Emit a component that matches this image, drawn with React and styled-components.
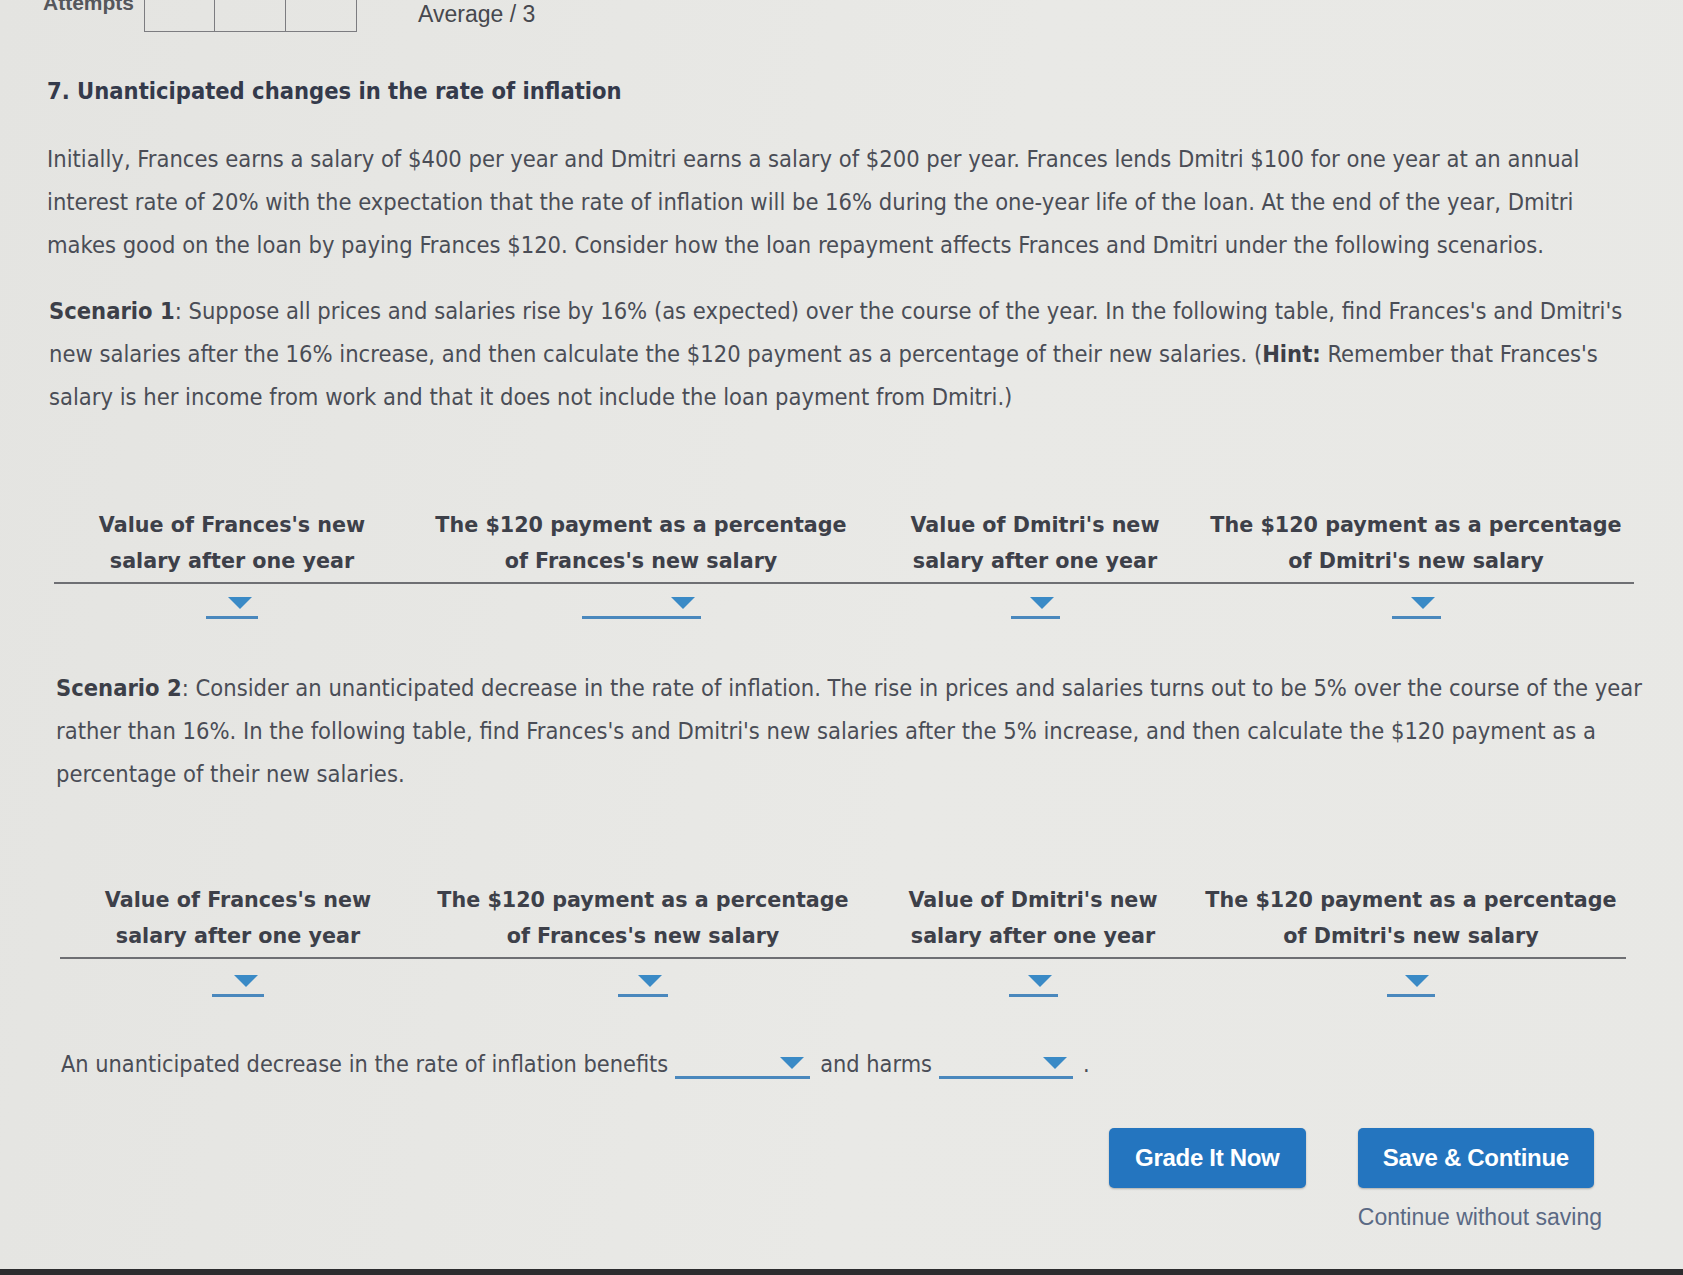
import React from "react";
import styled, { createGlobalStyle } from "styled-components";

const Global = createGlobalStyle`
  html, body { margin: 0; padding: 0; background: #e7e7e4; }
  body {
    font-family: "DejaVu Sans Condensed", "DejaVu Sans", sans-serif;
    font-stretch: condensed;
    color: #4a4d56;
  }
  * { box-sizing: border-box; }
`;

const Page = styled.div`
  min-height: 1275px;
  display: flex;
  flex-direction: column;
  overflow: hidden;
  background: linear-gradient(100deg, #e4e4e1 0%, #e9e9e6 55%, #e8e8e5 100%);
`;

const Content = styled.main`
  flex: 1;
  padding-left: 47px;
`;

const BottomBar = styled.div`
  height: 6px;
  background: #2c2c2e;
`;

const TopBar = styled.div`
  display: flex;
  align-items: flex-start;
  margin-top: -16px;
  height: 48px;
`;

const AttemptsLabel = styled.span`
  font-family: "Liberation Sans", Arial, sans-serif;
  font-weight: bold;
  font-size: 21px;
  color: #55575c;
  line-height: 21px;
  padding-top: 8px;
  margin-left: -4px;
`;

const AttemptBoxes = styled.div`
  display: flex;
  margin-left: 10px;
`;

const AttemptCell = styled.div`
  width: 71px;
  height: 48px;
  border: 1.5px solid #7c7c80;
  border-left-width: ${(p) => (p.$first ? "1.5px" : "0")};
`;

const Average = styled.span`
  font-family: "Liberation Sans", Arial, sans-serif;
  font-size: 23px;
  color: #46484e;
  line-height: 26px;
  padding-top: 17px;
  margin-left: 61px;
`;

const Title = styled.h2`
  margin: 45px 0 0 0;
  font-size: 23.5px;
  line-height: 28px;
  font-weight: bold;
  color: #343a4b;
`;

const Para = styled.p`
  margin: ${(p) => p.$mt}px 0 0 ${(p) => p.$ml || 0}px;
  font-size: 23.5px;
  line-height: 43px;
  color: #4a4d56;
  white-space: nowrap;
`;

const B = styled.b`
  color: #3c3f48;
`;

const Table = styled.div`
  margin: ${(p) => p.$mt}px 0 0 ${(p) => p.$ml}px;
  width: ${(p) => p.$w}px;
  display: grid;
  grid-template-columns: 356px ${(p) => p.$c2}px 326px 1fr;
`;

const HeadCell = styled.div`
  font-family: "DejaVu Sans", Verdana, sans-serif;
  font-stretch: normal;
  font-weight: bold;
  font-size: 20.7px;
  line-height: 36px;
  color: #3d4049;
  text-align: center;
  white-space: nowrap;
  padding-bottom: 3px;
  border-bottom: 2px solid #6e6f73;
`;

const BodyCell = styled.div`
  display: flex;
  justify-content: center;
  padding-top: ${(p) => p.$pt}px;
`;

const Dropdown = styled.span`
  display: inline-flex;
  justify-content: flex-end;
  align-items: flex-start;
  width: ${(p) => p.$w}px;
  height: 22px;
  border-bottom: 3px solid #4a88bd;
  padding-right: 6px;
  vertical-align: ${(p) => (p.$inline ? "3px" : "baseline")};
  margin: ${(p) => (p.$inline ? "0 10px 0 7px" : "0")};
`;

const Caret = styled.span`
  width: 0;
  height: 0;
  border-left: 12px solid transparent;
  border-right: 12px solid transparent;
  border-top: 12px solid #3a8ac6;
`;

const Sentence = styled.p`
  margin: 52px 0 0 14px;
  font-size: 23.3px;
  line-height: 30px;
  color: #4a4d56;
  white-space: nowrap;
`;

const Actions = styled.div`
  margin-top: 49px;
  padding-right: 81px;
  display: flex;
  justify-content: flex-end;
  align-items: flex-start;
  gap: 52px;
`;

const ActionColumn = styled.div`
  display: flex;
  flex-direction: column;
  align-items: flex-start;
  gap: 16px;
`;

const Button = styled.button`
  height: 60px;
  width: ${(p) => p.$w}px;
  border: none;
  border-radius: 5px;
  background: #2475bf;
  color: #ffffff;
  font-family: "Liberation Sans", Arial, sans-serif;
  font-weight: bold;
  font-size: 24px;
  letter-spacing: -0.3px;
  cursor: pointer;
  box-shadow: 0 1px 2px rgba(0, 0, 0, 0.25);
`;

const LinkText = styled.a`
  font-family: "Liberation Sans", Arial, sans-serif;
  font-size: 23px;
  line-height: 26px;
  color: #5a6984;
  text-decoration: none;
  cursor: pointer;
`;

const headers = [
  ["Value of Frances's new", "salary after one year"],
  ["The $120 payment as a percentage", "of Frances's new salary"],
  ["Value of Dmitri's new", "salary after one year"],
  ["The $120 payment as a percentage", "of Dmitri's new salary"],
];

function AnswerTable({ mt, ml, w, c2, widths, pt }) {
  return (
    <Table $mt={mt} $ml={ml} $w={w} $c2={c2}>
      {headers.map((h, i) => (
        <HeadCell key={"h" + i}>
          {h[0]}
          <br />
          {h[1]}
        </HeadCell>
      ))}
      {widths.map((dw, i) => (
        <BodyCell key={"b" + i} $pt={pt}>
          <Dropdown $w={dw}>
            <Caret />
          </Dropdown>
        </BodyCell>
      ))}
    </Table>
  );
}

export default function App() {
  return (
    <Page>
      <Global />
      <Content>
        <TopBar>
          <AttemptsLabel>Attempts</AttemptsLabel>
          <AttemptBoxes>
            <AttemptCell $first />
            <AttemptCell />
            <AttemptCell />
          </AttemptBoxes>
          <Average>Average / 3</Average>
        </TopBar>

        <Title>7. Unanticipated changes in the rate of inflation</Title>

        <Para $mt={33}>
          Initially, Frances earns a salary of $400 per year and Dmitri earns a salary of $200 per year. Frances lends Dmitri $100 for one year at an annual
          <br />
          interest rate of 20% with the expectation that the rate of inflation will be 16% during the one-year life of the loan. At the end of the year, Dmitri
          <br />
          makes good on the loan by paying Frances $120. Consider how the loan repayment affects Frances and Dmitri under the following scenarios.
        </Para>

        <Para $mt={23} $ml={2}>
          <B>Scenario 1</B>: Suppose all prices and salaries rise by 16% (as expected) over the course of the year. In the following table, find Frances's and Dmitri's
          <br />
          new salaries after the 16% increase, and then calculate the $120 payment as a percentage of their new salaries. (<B>Hint:</B> Remember that Frances's
          <br />
          salary is her income from work and that it does not include the loan payment from Dmitri.)
        </Para>

        <AnswerTable mt={88} ml={7} w={1580} c2={462} widths={[52, 119, 49, 49]} pt={13} />

        <Para $mt={48} $ml={9}>
          <B>Scenario 2</B>: Consider an unanticipated decrease in the rate of inflation. The rise in prices and salaries turns out to be 5% over the course of the year
          <br />
          rather than 16%. In the following table, find Frances's and Dmitri's new salaries after the 5% increase, and then calculate the $120 payment as a
          <br />
          percentage of their new salaries.
        </Para>

        <AnswerTable mt={86} ml={13} w={1566} c2={454} widths={[52, 50, 49, 48]} pt={16} />

        <Sentence>
          An unanticipated decrease in the rate of inflation benefits
          <Dropdown $w={135} $inline>
            <Caret />
          </Dropdown>
          and harms
          <Dropdown $w={134} $inline>
            <Caret />
          </Dropdown>
          .
        </Sentence>

        <Actions>
          <Button $w={197}>Grade It Now</Button>
          <ActionColumn>
            <Button $w={236}>Save &amp; Continue</Button>
            <LinkText>Continue without saving</LinkText>
          </ActionColumn>
        </Actions>
      </Content>
      <BottomBar />
    </Page>
  );
}
